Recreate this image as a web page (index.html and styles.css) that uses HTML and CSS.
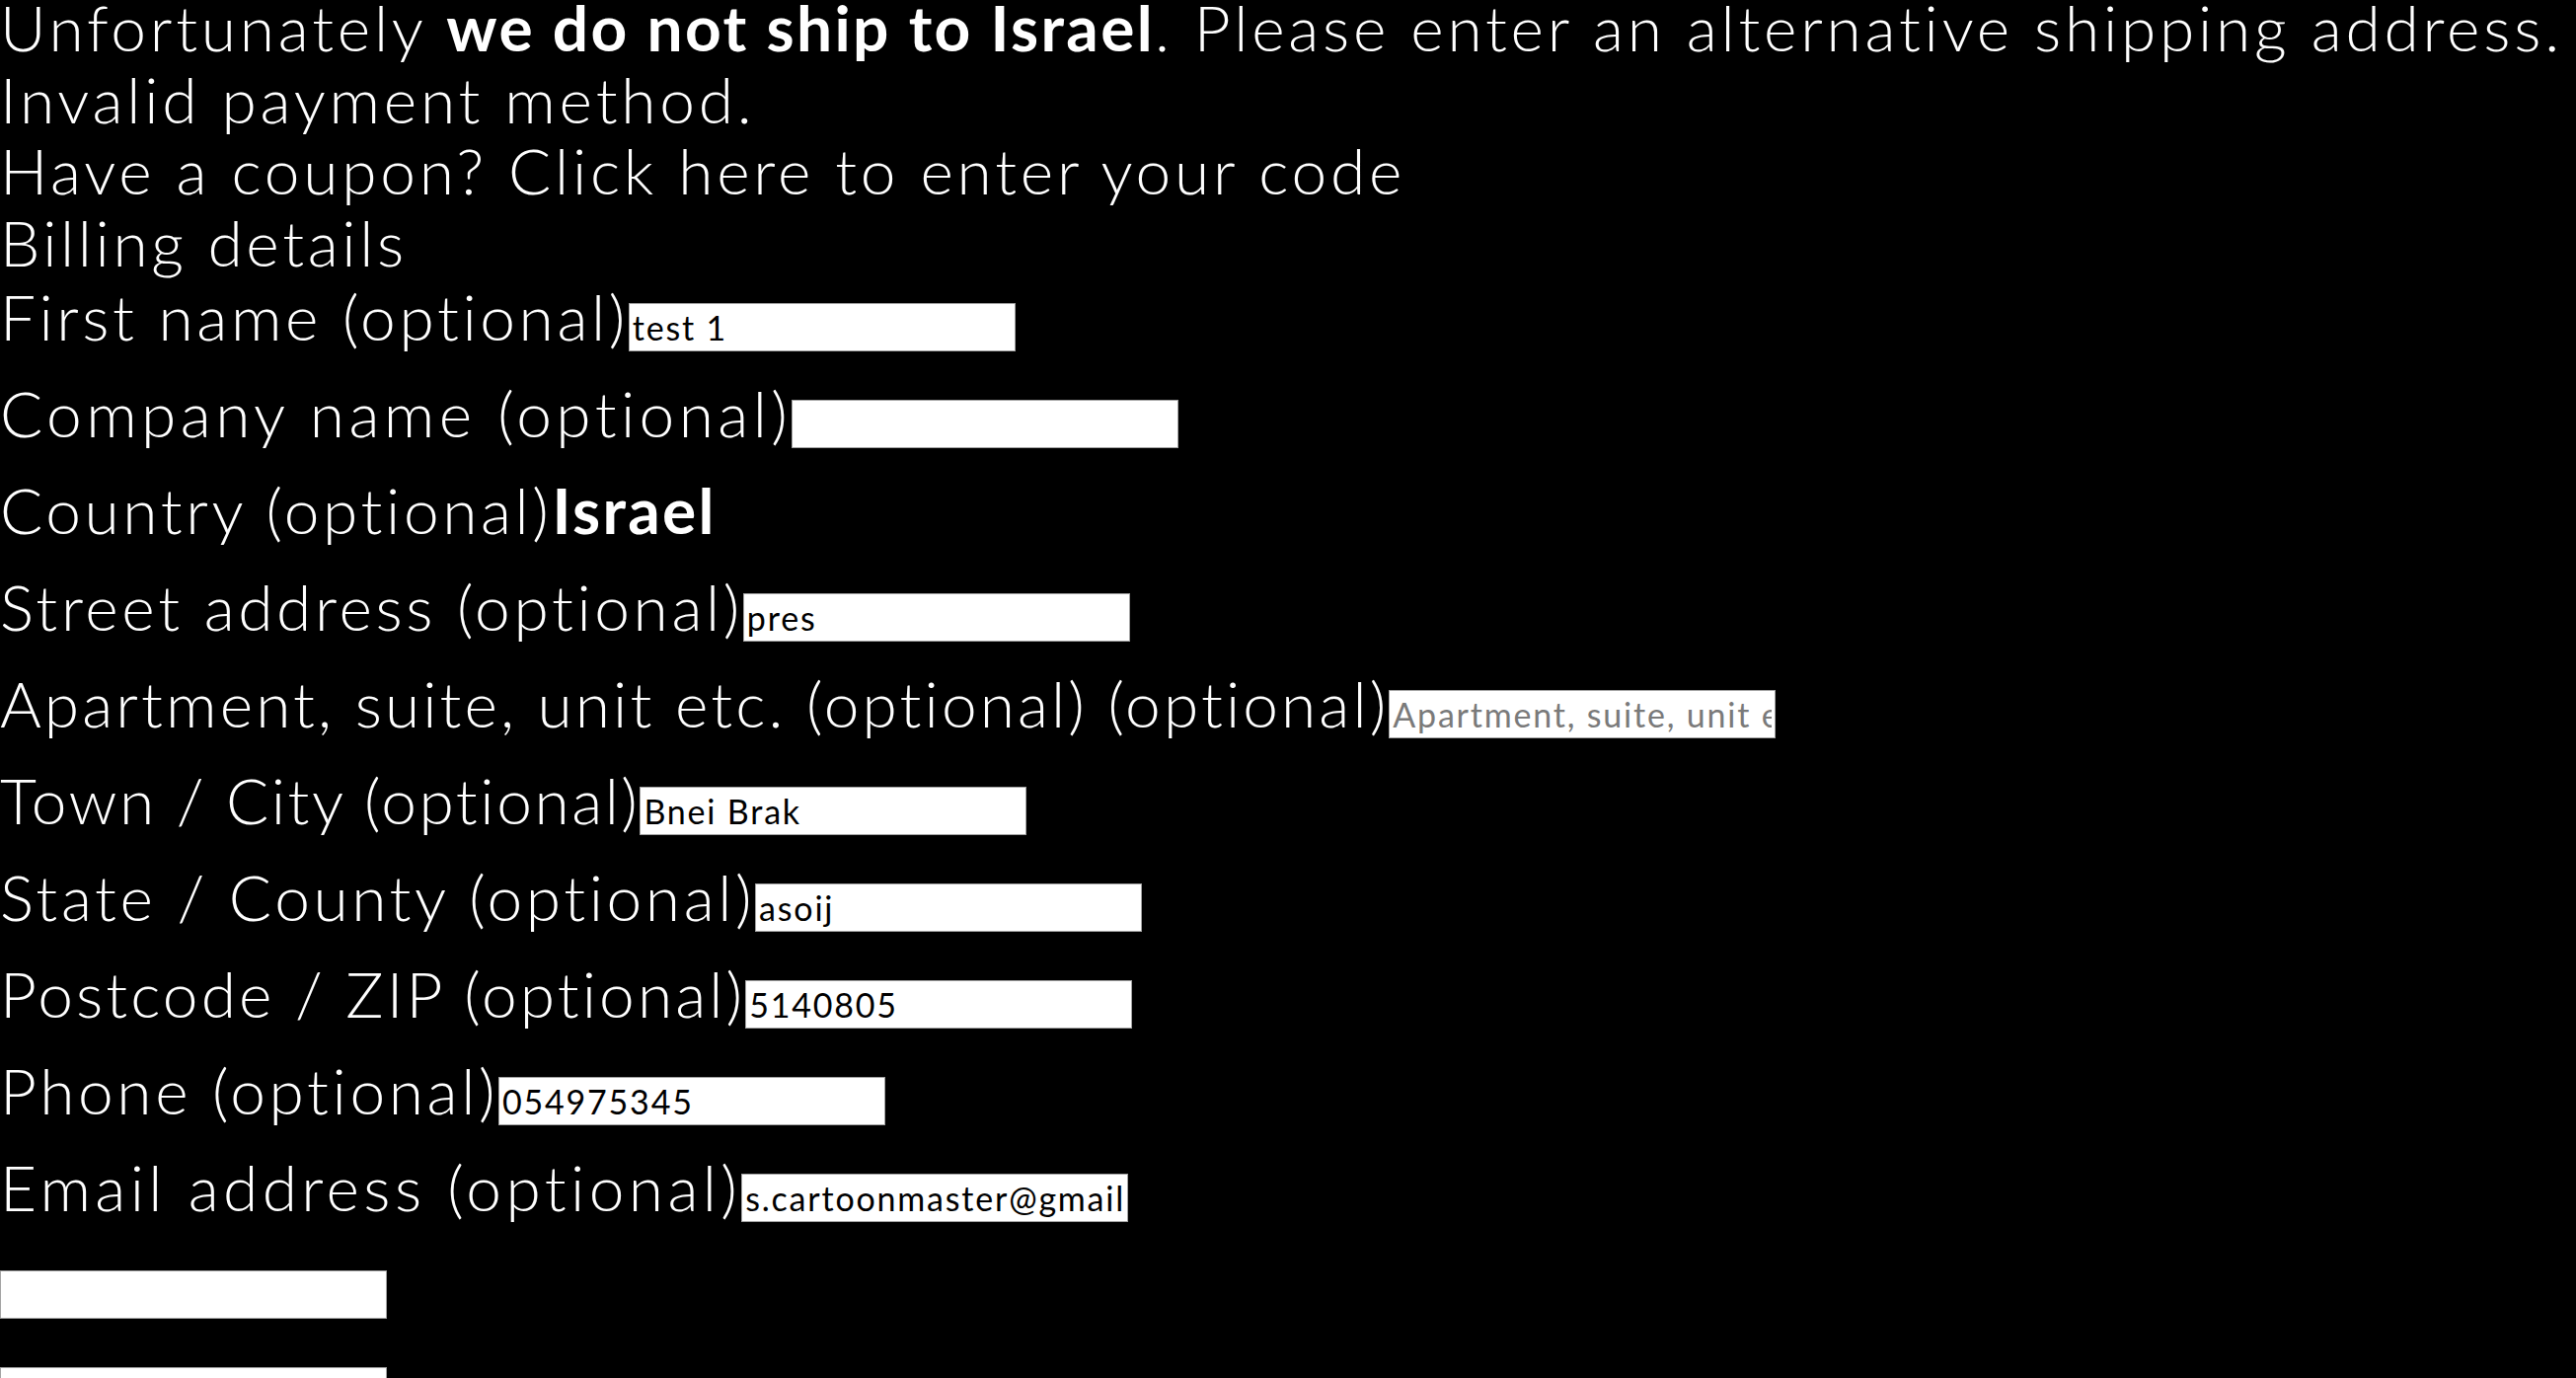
FILE: index.html
```html
<!DOCTYPE html>
<html lang="en">
<head>
<meta charset="utf-8">
<title>Checkout</title>
<link rel="stylesheet" href="styles.css">
</head>
<body>
<div class="page">
  <div class="notice">Unfortunately <strong>we do not ship to Israel</strong>. Please enter an alternative shipping address.</div>
  <div class="notice">Invalid payment method.</div>
  <div class="notice">Have a coupon? Click here to enter your code</div>
  <h3 class="heading">Billing details</h3>
  <form class="billing">
    <p class="row"><label class="lbl">First name (optional)</label><input class="field" type="text" value="test 1"></p>
    <p class="row"><label class="lbl lbl-wide">Company name (optional)</label><input class="field" type="text" value=""></p>
    <p class="row"><label class="lbl">Country (optional)</label><strong class="country">Israel</strong></p>
    <p class="row"><label class="lbl">Street address (optional)</label><input class="field" type="text" value="pres"></p>
    <p class="row"><label class="lbl lbl-narrow">Apartment, suite, unit etc. (optional) (optional)</label><input class="field" type="text" placeholder="Apartment, suite, unit etc. (optional)"></p>
    <p class="row"><label class="lbl lbl-tight">Town / City (optional)</label><input class="field" type="text" value="Bnei Brak"></p>
    <p class="row"><label class="lbl">State / County (optional)</label><input class="field" type="text" value="asoij"></p>
    <p class="row"><label class="lbl lbl-narrow">Postcode / ZIP (optional)</label><input class="field" type="text" value="5140805"></p>
    <p class="row"><label class="lbl">Phone (optional)</label><input class="field" type="tel" value="054975345"></p>
    <p class="row"><label class="lbl lbl-wide">Email address (optional)</label><input class="field" type="email" value="s.cartoonmaster@gmail.com"></p>
    <p class="row"><input class="field" type="text" value=""></p>
    <p class="row"><input class="field" type="text" value=""></p>
  </form>
</div>
</body>
</html>
```
FILE: styles.css
```css
html, body {
  margin: 0;
  padding: 0;
  background: #000;
}
body {
  color: #fff;
  font-family: Lato, "Open Sans", sans-serif;
  font-weight: 300;
  font-size: 64px;
  overflow: hidden;
}
.page {
  margin-top: -8px;
  line-height: 72.6px;
  letter-spacing: 3.6px;
  white-space: nowrap;
}
.notice {
  margin: 0;
  letter-spacing: 3.77px;
}
.notice strong,
.country {
  font-weight: 700;
  letter-spacing: 2.35px;
}
.heading {
  margin: 0;
  font-size: 64px;
  font-weight: 300;
}
.billing {
  margin: 2.6px 0 0;
}
.row {
  margin: 0;
  height: 98px;
}
.lbl {
  font-weight: 300;
}
.lbl-wide {
  letter-spacing: 4.4px;
}
.lbl-narrow {
  letter-spacing: 3.1px;
}
.lbl-tight {
  letter-spacing: 2.55px;
}
.field {
  box-sizing: border-box;
  width: 392px;
  height: 49px;
  margin: 0;
  padding: 0 3px;
  border: 1px solid #a3a3a3;
  background: #fff;
  color: #000;
  font-family: Lato, "Open Sans", sans-serif;
  font-weight: 400;
  font-size: 34px;
  letter-spacing: 1.8px;
  vertical-align: baseline;
  outline: none;
}
.field::placeholder {
  color: #7a7a7a;
  opacity: 1;
}
```
